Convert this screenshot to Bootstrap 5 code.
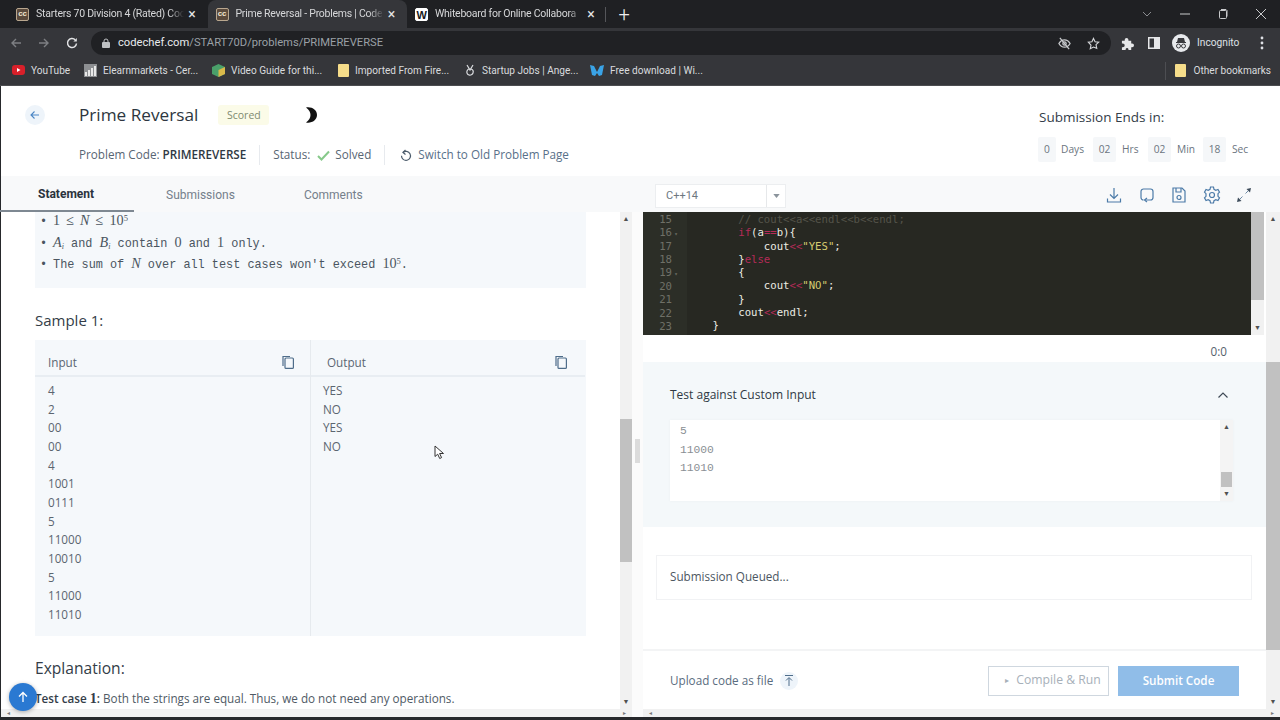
<!DOCTYPE html>
<html lang="en">
<head>
  <meta charset="UTF-8">
  <title>Prime Reversal - Problems | CodeChef</title>
  <link href="https://cdn.jsdelivr.net/npm/bootstrap@5.3.0/dist/css/bootstrap.min.css" rel="stylesheet">
  <style>
    html, body { height: 720px; overflow: hidden; }
    body { font-family: "Open Sans", sans-serif; background: #fff; color: #3f4a56; font-size: 11.7px; }

    /* Browser chrome */
    .tab-strip { height: 28px; background: #1f2023; padding-left: 8px; color: #d6d7d9; font-family: Roboto, sans-serif; font-size: 10.5px; letter-spacing: -.25px; }
    .br-tab { width: 199.5px; height: 28px; padding: 0 12px 0 8px; flex: none; }
    .br-tab-on { background: #35363a; border-radius: 8px 8px 0 0; }
    .br-tab-title { width: 148px; white-space: nowrap; overflow: hidden; margin-left: 7px; flex: none; -webkit-mask-image: linear-gradient(90deg, #000 90%, transparent); mask-image: linear-gradient(90deg, #000 90%, transparent); }
    .fav { width: 13px; height: 13px; flex: none; background: #5b4a3c; border: 1px solid #b9a78f; color: #f2e6d0; font: 700 8px/10px "Liberation Sans", sans-serif; text-align: center; border-radius: 2px; }
    .fav-w { background: #fff; border-color: #fff; color: #17181a; font-size: 11px; line-height: 12px; }
    .br-x { margin-left: auto; color: #e4e5e6; font-size: 14px; line-height: 1; }
    .br-plus { color: #eee; font-size: 20px; line-height: 1; margin-left: 13px; font-weight: 300; }
    .tab-sep { width: 1px; height: 15px; background: #55565a; margin-left: -2px; }
    .win-btns { margin-left: auto; gap: 28px; padding-right: 14px; }
    .toolbar { height: 30px; background: #35363a; padding: 0 16px 0 10px; }
    .omni { width: 1020px; height: 24px; margin-left: 13px; background: #202124; border-radius: 12px; padding: 0 11px 0 11px; color: #9aa0a6; font-family: Roboto, sans-serif; font-size: 11.2px; white-space: nowrap; }
    .omni b { color: #e8eaed; font-weight: 400; }
    .ic-ext { margin-left: 10px; }
    .ic-side { margin-left: 14px; }
    .incog { color: #dfe1e5; font-family: Roboto, sans-serif; font-size: 10.2px; gap: 7px; margin-left: 12px; }
    .bookmarks { height: 28px; background: #35363a; color: #d9dbde; font-family: Roboto, sans-serif; font-size: 10.1px; border-bottom: 1px solid #4c4d50; padding: 0 0 2px 12px; white-space: nowrap; }
    .bm-item { gap: 6px; flex: none; }
    .bm-1 { width: 72px; } .bm-2 { width: 128px; } .bm-3 { width: 126px; } .bm-4 { width: 126px; } .bm-5 { width: 126px; }
    .bm-other { margin-left: auto; padding-right: 9px; gap: 8px; }
    .bm-sep { width: 1px; height: 18px; background: #4d4e52; margin-right: 1px; }
    .folder { width: 11px; height: 13px; background: #f6dd8a; border-radius: 1px; flex: none; }

    /* Page */
    .page-wrap { height: 634px; border-left: 1px solid #26282b; border-bottom: 3px solid #26282b; }
    .prob-head { height: 90px; flex: none; }
    .head-left { padding: 19px 0 0 24px; }
    .back-btn { width: 20px; height: 20px; border-radius: 50%; background: #eef4fa; flex: none; }
    .prob-title { font-size: 17.2px; font-weight: 500; color: #2d3640; margin: 0 0 0 34px; line-height: 20px; white-space: nowrap; }
    .scored { margin-left: 20px; width: 51px; height: 20px; background: #fbfbe8; color: #7f8a70; font-size: 10.5px; line-height: 20px; text-align: center; border-radius: 3px; }
    .moon { margin-left: 35px; }
    .prob-meta { margin: 20px 0 0 54px; height: 20px; white-space: nowrap; color: #586573; }
    .prob-meta b { color: #2f3944; font-weight: 600; }
    .meta-sep { width: 1px; height: 20px; background: #e7eaee; margin: 0 13px; }
    .meta-check { margin: 0 5px 0 7px; }
    .meta-undo { margin: 0 6px 0 2px; }
    .meta-link { color: #587089; }
    .timer { width: 242px; padding-top: 22px; flex: none; }
    .timer-title { font-size: 13.5px; font-weight: 500; color: #333d48; line-height: 18px; margin: 0 0 11px 1px; }
    .timer-row { font-size: 10.2px; color: #6b7580; height: 25px; }
    .t-box { background: #f5f7f9; height: 25px; line-height: 25px; text-align: center; border-radius: 2px; }
    .t-1 { width: 18px; } .t-2 { width: 23px; }
    .t-lbl-d { margin-left: 5px; width: 32px; }
    .t-lbl-s { margin-left: 6px; width: 26px; }

    .work-bar { height: 36px; flex: none; background: #f8f9fa; }
    .tabs-left { width: 631px; flex: none; }
    .prob-tab { height: 36px; color: #75808b; font-family: Roboto, sans-serif; font-size: 12px; padding-top: 10px; }
    .tab-active { width: 134px; margin-left: -1px; padding: 9px 0 0 38px; color: #2b333c; font-weight: 700; border-bottom: 2px solid #7e8892; margin-right: 32px; }
    .tab-comments { margin-left: 69px; }
    .tabs-right { flex: 1; padding: 0 27px 0 23px; }
    .lang-sel { width: 131px; height: 24px; background: #fff; border: 1px solid #eceef0; margin-top: 8px; color: #6d7780; font-family: Roboto, sans-serif; font-size: 11px; padding-left: 10px; }
    .lang-caret { margin-left: auto; width: 19px; height: 22px; border-left: 1px solid #e6e8ea; }
    .tool-icons { margin-left: auto; gap: 14.5px; padding-top: 2px; }

    .split { flex: 1; min-height: 0; }
    .left-pane { width: 631px; flex: none; }
    .left-body { flex: 1; min-height: 0; }
    .left-scroll { flex: 1; min-width: 0; overflow: hidden; padding: 0 34px; }
    .constraint-box { background: #f5f8fb; height: 76px; padding: 0; font-family: "Liberation Mono", monospace; font-size: 11.85px; color: #4a5560; margin: 0; list-style: none; }
    .constraint-box li { height: 21.5px; line-height: 17px; padding-left: 5px; white-space: nowrap; }
    .constraint-box li::before { content: "•"; margin-right: 6px; }
    .mth { font-family: "Liberation Serif", serif; font-size: 14.2px; }
    .mth-wide { word-spacing: 2.5px; }
    .mth i { font-style: italic; }
    .mth sup { font-size: 8.5px; top: -.5em; }
    .mth sub { font-size: 8px; }
    .sec-h { font-size: 15px; font-weight: 500; color: #333d48; line-height: 20px; margin: 0; }
    .sec-sample { margin-top: 22px; margin-bottom: 10px; }
    .sample-tbl { background: #f5f8fb; height: 296px; }
    .sample-col { width: 275px; flex: none; }
    .sample-col + .sample-col { border-left: 1px solid #e6eaee; }
    .sample-hd { height: 37px; border-bottom: 2px solid #e8edf2; color: #5b6672; padding: 8px 16px 0 13px; }
    .sample-hd span { margin-top: 3px; }
    .sample-hd-out { padding: 8px 18px 0 16px; }
    .sample-lines { padding: 4px 0 0 13px; line-height: 18.65px; color: #5b6570; white-space: pre; }
    .sample-out { padding-left: 12px; }
    .sec-expl { margin-top: 22px; margin-bottom: 10px; font-size: 15.6px; }
    .expl-text { white-space: nowrap; color: #4f5a65; line-height: 20px; }
    .expl-text b { font-weight: 600; color: #333d48; }
    .sbar { width: 12px; flex: none; background: #f1f1f1; }
    .sbar-arrow { height: 14px; color: #505050; font-size: 7px; line-height: 14px; text-align: center; }
    .sbar-l-thumb { height: 143px; margin-top: 193px; background: #c1c1c1; }
    .hbar { height: 8px; flex: none; background: #f1f1f1; color: #777; font-size: 6px; line-height: 8px; padding: 0 6px; }
    .grip { width: 11px; flex: none; background: #fbfbfb; }
    .grip-dots { width: 5px; height: 24px; margin: 227px auto 0; background-image: radial-gradient(#dcdcdc 1px, transparent 1px); background-size: 2px 3px; }

    .right-pane { flex: 1; min-width: 0; }
    .right-body { flex: 1; min-height: 0; }
    .right-main { flex: 1; min-width: 0; }
    .editor-row { height: 123px; flex: none; padding-right: 2px; }
    .editor { flex: 1; min-width: 0; background: #272822; overflow: hidden; font-family: "DejaVu Sans Mono", monospace; font-size: 10.65px; line-height: 13.25px; }
    .ed-gutter { width: 44px; flex: none; background: #2c2e27; color: #6f7067; text-align: right; padding: 1px 15px 0 0; }
    .ed-fold { display: inline-block; width: 8px; margin-right: -8px; font-size: 6px; text-align: center; vertical-align: middle; }
    .ed-code { color: #ecece4; white-space: pre; padding-top: 1px; }
    .c-com { color: #55544a; } .c-key { color: #b52b58; } .c-str { color: #d6cc70; }
    .ed-bar { width: 13px; flex: none; background: #f1f1f1; }
    .ed-thumb { height: 88px; background: #c1c1c1; }
    .ed-down { margin-top: auto; }
    .row-pos { height: 27px; flex: none; padding: 7px 39px 0 0; color: #56616c; }
    .custom-sec { height: 165px; flex: none; background: #f4f8fa; padding: 21px 33px 0 27px; }
    .custom-title { font-size: 12px; font-weight: 500; color: #2f3944; line-height: 24px; padding-right: 5px; }
    .custom-box { height: 81px; background: #fff; margin-top: 13px; box-shadow: 0 0 3px rgba(0,0,0,.04); }
    .custom-text { flex: 1; font-family: "Liberation Mono", monospace; font-size: 11.3px; line-height: 18.6px; color: #8a8f94; padding: 2px 0 0 10px; white-space: pre; }
    .cust-bar { width: 13px; background: #f4f4f4; flex: none; }
    .cust-thumb { height: 16px; width: 11px; margin: 38px auto 0; background: #c1c1c1; }
    .queue-wrap { height: 124px; flex: none; padding: 28px 14px 0 13px; border-bottom: 2px solid #f3f4f5; }
    .queue-box { height: 45px; border: 1px solid #f1f2f4; padding: 0 0 2px 13px; color: #4c5661; }
    .foot-row { height: 57px; flex: none; padding: 2px 27px 0 27px; }
    .up-link { color: #5a6c7e; gap: 7px; }
    .up-ico { width: 18px; height: 18px; border-radius: 50%; background: #eef4fa; }
    .btn.run-btn { width: 121px; height: 30px; border: 1px solid #cfd7df; border-radius: 0; color: #a7b0b9; font-size: 12.2px; padding: 0 0 0 9px; margin-right: 9px; }
    .run-caret { font-size: 8px; margin-right: 7px; vertical-align: 1px; }
    .btn.sub-btn { width: 121px; height: 30px; background: #90bde8; border: 0; border-radius: 0; color: #fff; font-size: 11.7px; font-weight: 600; padding: 0; }
    .outer-bar { width: 14px; flex: none; background: #f1f1f1; }
    .outer-thumb { height: 288px; margin-top: 136px; background: #c1c1c1; }

    /* Overlays */
    .fab { position: absolute; left: 9px; top: 683px; width: 28px; height: 28px; border-radius: 50%; background: #2a79d2; box-shadow: 0 1px 4px rgba(0,0,0,.3); }
    .cursor-ov { position: absolute; left: 434px; top: 445px; }
  </style>
</head>
<body>
  <!-- Browser chrome -->
  <div class="tab-strip d-flex align-items-center">
    <div class="br-tab d-flex align-items-center"><span class="fav">cc</span><span class="br-tab-title">Starters 70 Division 4 (Rated) Coc</span><span class="br-x">×</span></div>
    <div class="br-tab br-tab-on d-flex align-items-center"><span class="fav">cc</span><span class="br-tab-title">Prime Reversal - Problems | Code</span><span class="br-x">×</span></div>
    <div class="br-tab d-flex align-items-center"><span class="fav fav-w">W</span><span class="br-tab-title">Whiteboard for Online Collabora</span><span class="br-x">×</span></div>
    <span class="tab-sep"></span>
    <span class="br-plus">+</span>
    <div class="win-btns d-flex align-items-center">
      <svg width="10" height="10" viewBox="0 0 10 10" fill="none" stroke="#8a8c90"><path d="M1 3l4 4 4-4"/></svg>
      <svg width="10" height="10" viewBox="0 0 10 10" fill="none" stroke="#c9cacc"><path d="M0 5h10"/></svg>
      <svg width="10" height="10" viewBox="0 0 10 10" fill="none" stroke="#c9cacc"><rect x="1.5" y="1.5" width="7" height="8" rx="1"/><path d="M3 .5h5l1 1v6"/></svg>
      <svg width="10" height="10" viewBox="0 0 10 10" fill="none" stroke="#c9cacc"><path d="M0 0l10 10M10 0L0 10"/></svg>
    </div>
  </div>
  <div class="toolbar d-flex align-items-center">
    <svg class="me-3" width="12" height="12" viewBox="0 0 12 12" fill="none" stroke="#7d7f83" stroke-width="1.4"><path d="M11 6H2M6 2L2 6l4 4"/></svg>
    <svg class="me-3" width="12" height="12" viewBox="0 0 12 12" fill="none" stroke="#7d7f83" stroke-width="1.4"><path d="M1 6h9M6 2l4 4-4 4"/></svg>
    <svg width="12" height="12" viewBox="0 0 12 12" fill="none" stroke="#e3e4e6" stroke-width="1.5"><path d="M10.5 6.5A4.5 4.5 0 1 1 9.2 2.8"/><path d="M10.8 1v3.4H7.4" fill="#e3e4e6" stroke="none"/></svg>
    <div class="omni d-flex align-items-center">
      <svg class="me-2" width="8" height="10" viewBox="0 0 8 10" fill="#bfc1c4"><rect y="4" width="8" height="6" rx="1"/><path d="M2 4V3a2 2 0 0 1 4 0v1" fill="none" stroke="#bfc1c4"/></svg>
      <span><b>codechef.com</b>/START70D/problems/PRIMEREVERSE</span>
      <svg class="ms-auto me-2" width="13" height="13" viewBox="0 0 14 14" fill="none" stroke="#c9cbce" stroke-width="1.4"><path d="M1 7s2.2-4 6-4 6 4 6 4-2.2 4-6 4-6-4-6-4z"/><circle cx="7" cy="7" r="1.8"/><path d="M2 1l10 12"/></svg>
      <svg class="ms-2" width="13" height="13" viewBox="0 0 14 14" fill="none" stroke="#d5d7da" stroke-width="1.2"><path d="M7 1.5l1.7 3.6 3.9.5-2.9 2.7.8 3.9L7 10.8l-3.5 1.9.8-3.9L1.4 5.6l3.9-.5z"/></svg>
    </div>
    <svg class="ic-ext" width="13" height="13" viewBox="0 0 14 14" fill="#e6e7e9"><path d="M1 4h3V3a2 2 0 0 1 4 0v1h3v3h1a2 2 0 0 1 0 4h-1v3H8v-1a1.6 1.6 0 0 0-3 0v1H1v-3h1a2 2 0 0 0 0-4H1z"/></svg>
    <svg class="ic-side" width="12" height="12" viewBox="0 0 12 12"><rect x=".75" y=".75" width="10.5" height="10.5" fill="none" stroke="#e6e7e9" stroke-width="1.5"/><rect x="6" y="1" width="5" height="10" fill="#e6e7e9"/></svg>
    <div class="incog d-flex align-items-center">
      <svg width="18" height="18" viewBox="0 0 18 18"><circle cx="9" cy="9" r="9" fill="#e8eaed"/><path d="M4 8h10v1H4zM6 4h6l1 4H5z" fill="#3a3b3f"/><circle cx="6.5" cy="12" r="2" fill="none" stroke="#3a3b3f"/><circle cx="11.5" cy="12" r="2" fill="none" stroke="#3a3b3f"/></svg>
      <span>Incognito</span>
    </div>
    <svg class="ms-auto" width="4" height="14" viewBox="0 0 4 14" fill="#dfe1e5"><circle cx="2" cy="2" r="1.4"/><circle cx="2" cy="7" r="1.4"/><circle cx="2" cy="12" r="1.4"/></svg>
  </div>
  <div class="bookmarks d-flex align-items-center">
    <div class="bm-item bm-1 d-flex align-items-center">
      <svg width="13" height="10" viewBox="0 0 13 10"><rect width="13" height="10" rx="3" fill="#d8202a"/><path d="M5 3l3.5 2L5 7z" fill="#fff"/></svg><span>YouTube</span>
    </div>
    <div class="bm-item bm-2 d-flex align-items-center">
      <svg width="13" height="13" viewBox="0 0 13 13"><rect width="13" height="13" fill="#8d8f92"/><path d="M1 12V8h2v4zm3 0V6h2v6zm3 0V4h2v8zm3 0V2h2v10z" fill="#e8e8e8"/></svg><span>Elearnmarkets - Cer...</span>
    </div>
    <div class="bm-item bm-3 d-flex align-items-center">
      <svg width="13" height="13" viewBox="0 0 13 13"><path d="M6.5 0L13 3v7l-6.5 3L0 10V3z" fill="#4aa06a"/><path d="M6.5 6L13 3v7l-6.5 3z" fill="#d9b94a"/></svg><span>Video Guide for thi...</span>
    </div>
    <div class="bm-item bm-4 d-flex align-items-center"><span class="folder"></span><span>Imported From Fire...</span></div>
    <div class="bm-item bm-5 d-flex align-items-center">
      <svg width="12" height="13" viewBox="0 0 12 13" fill="none" stroke="#d9dbde" stroke-width="1.2"><path d="M3 1l3 5 3-5M3 7a3 3 0 1 0 6 2 3 3 0 0 0-6-2z"/></svg><span>Startup Jobs | Ange...</span>
    </div>
    <div class="bm-item d-flex align-items-center">
      <svg width="14" height="13" viewBox="0 0 14 13"><path d="M0 1l4 1 3 6 3-6 4-1-2 10-3 1-2-3-2 3-3-1z" fill="#3aa3e6"/></svg><span>Free download | Wi...</span>
    </div>
    <div class="bm-other d-flex align-items-center"><span class="bm-sep"></span><span class="folder"></span><span>Other bookmarks</span></div>
  </div>

  <!-- Page -->
  <div class="page-wrap d-flex flex-column">
    <div class="prob-head d-flex justify-content-between">
      <div class="head-left">
        <div class="d-flex align-items-center">
          <span class="back-btn d-flex align-items-center justify-content-center">
            <svg width="10" height="10" viewBox="0 0 10 10" fill="none" stroke="#4a86c5" stroke-width="1.1"><path d="M9 5H1M4.5 1.5L1 5l3.5 3.5"/></svg>
          </span>
          <h1 class="prob-title">Prime Reversal</h1>
          <span class="scored">Scored</span>
          <svg class="moon" width="14" height="16" viewBox="0 0 14 16"><path d="M2 .5C8-.5 13 3 13 8s-5 8.5-11 7.5C5 13 6.5 11 6.5 8S5 3 2 .5z" fill="#111"/></svg>
        </div>
        <div class="prob-meta d-flex align-items-center">
          <span>Problem Code: <b>PRIMEREVERSE</b></span>
          <span class="meta-sep"></span>
          <span>Status:</span>
          <svg class="meta-check" width="13" height="11" viewBox="0 0 13 11" fill="none" stroke="#86c98a" stroke-width="2"><path d="M1 6l3.5 3.5L12 1.5"/></svg>
          <span>Solved</span>
          <span class="meta-sep"></span>
          <svg class="meta-undo" width="12" height="13" viewBox="0 0 12 13" fill="none" stroke="#4b5b6b" stroke-width="1.2"><path d="M3 3.5a4.5 4.5 0 1 1-1.5 3.3"/><path d="M5.5 1L3 3.5l2.500 2"/></svg>
          <span class="meta-link">Switch to Old Problem Page</span>
        </div>
      </div>
      <div class="timer">
        <div class="timer-title">Submission Ends in:</div>
        <div class="timer-row d-flex align-items-center">
          <span class="t-box t-1">0</span><span class="t-lbl-d">Days</span>
          <span class="t-box t-2">02</span><span class="t-lbl-s">Hrs</span>
          <span class="t-box t-2">02</span><span class="t-lbl-s">Min</span>
          <span class="t-box t-2">18</span><span class="t-lbl-s">Sec</span>
        </div>
      </div>
    </div>

    <div class="work-bar d-flex">
      <div class="tabs-left d-flex">
        <div class="prob-tab tab-active">Statement</div>
        <div class="prob-tab">Submissions</div>
        <div class="prob-tab tab-comments">Comments</div>
      </div>
      <div class="tabs-right d-flex">
        <div class="lang-sel d-flex align-items-center">
          <span>C++14</span>
          <span class="lang-caret d-flex align-items-center justify-content-center">
            <svg width="7" height="4" viewBox="0 0 8 5" fill="#8b949c"><path d="M0 0h8L4 5z"/></svg>
          </span>
        </div>
        <div class="tool-icons d-flex align-items-center">
          <svg width="18" height="18" viewBox="0 0 18 18" fill="none" stroke="#4c7ba8" stroke-width="1.2"><path d="M9 2v10M5 8.5l4 4 4-4M2.500 12.5V16h13v-3.500"/></svg>
          <svg width="18" height="18" viewBox="0 0 18 18" fill="none" stroke="#4c7ba8" stroke-width="1.2"><path d="M5.500 14A2.500 2.500 0 0 1 3 11.500v-6A2.500 2.500 0 0 1 5.500 3h7A2.500 2.500 0 0 1 15 5.500v6a2.500 2.500 0 0 1-2.500 2.500H7"/><path d="M9 12l-2.500 2L9 16"/></svg>
          <svg width="18" height="18" viewBox="0 0 18 18" fill="none" stroke="#4c7ba8" stroke-width="1.2"><path d="M3 2h9l3 3v11H3z"/><path d="M6 2v4h5V2"/><circle cx="9" cy="11.5" r="2"/></svg>
          <svg width="18" height="18" viewBox="0 0 18 18" fill="none" stroke="#4c7ba8" stroke-width="1.2"><circle cx="9" cy="9" r="2.5"/><path d="M7.500 1h3l.5 2.300 1.800 1 2.200-.8 1.500 2.600L15 7.700v2.600l1.500 1.600-1.500 2.600-2.200-.8-1.800 1-.5 2.300h-3L7 14.700l-1.800-1-2.200.8-1.500-2.600L3 10.300V7.700L1.500 6.100 3 3.500l2.200.8 1.800-1z"/></svg>
          <svg width="18" height="18" viewBox="0 0 18 18" fill="#3d4c5b" stroke="#6d8aa5"><path d="M16 2l-4.500 1 3.500 3.500z" stroke="none"/><path d="M2 16l4.500-1L3 11.500z" stroke="none"/><path d="M13 5l-2.500 2.500M5 13l2.500-2.500" fill="none"/></svg>
        </div>
      </div>
    </div>

    <div class="split d-flex">
      <!-- Problem statement -->
      <div class="left-pane d-flex flex-column">
        <div class="left-body d-flex">
          <div class="left-scroll">
            <ul class="constraint-box">
              <li><span class="mth mth-wide">1 ≤ <i>N</i> ≤ 10<sup>5</sup></span></li>
              <li><span class="mth"><i>A<sub>i</sub></i></span> and <span class="mth"><i>B<sub>i</sub></i></span> contain <span class="mth">0</span> and <span class="mth">1</span> only.</li>
              <li>The sum of <span class="mth"><i>N</i></span> over all test cases won't exceed <span class="mth">10<sup>5</sup></span>.</li>
            </ul>
            <h2 class="sec-h sec-sample">Sample 1:</h2>
            <div class="sample-tbl d-flex">
              <div class="sample-col">
                <div class="sample-hd d-flex align-items-center justify-content-between">
                  <span>Input</span>
                  <svg width="12" height="14" viewBox="0 0 12 14" fill="none" stroke="#4f6d8a" stroke-width="1.2"><rect x="3" y="3" width="8.4" height="10.4" rx="1"/><path d="M1 11V1.500h7"/></svg>
                </div>
                <div class="sample-lines">4
2
00
00
4
1001
0111
5
11000
10010
5
11000
11010</div>
              </div>
              <div class="sample-col">
                <div class="sample-hd sample-hd-out d-flex align-items-center justify-content-between">
                  <span>Output</span>
                  <svg width="12" height="14" viewBox="0 0 12 14" fill="none" stroke="#4f6d8a" stroke-width="1.2"><rect x="3" y="3" width="8.4" height="10.4" rx="1"/><path d="M1 11V1.500h7"/></svg>
                </div>
                <div class="sample-lines sample-out">YES
NO
YES
NO</div>
              </div>
            </div>
            <h2 class="sec-h sec-expl">Explanation:</h2>
            <p class="expl-text mb-0"><b>Test case <span class="mth">1</span>:</b> Both the strings are equal. Thus, we do not need any operations.</p>
          </div>
          <div class="sbar d-flex flex-column">
            <div class="sbar-arrow">▲</div>
            <div class="sbar-l-thumb"></div>
            <div class="sbar-arrow mt-auto">▼</div>
          </div>
        </div>
        <div class="hbar d-flex justify-content-between"><span>◂</span><span>▸</span></div>
      </div>

      <div class="grip"><div class="grip-dots"></div></div>

      <!-- Editor side -->
      <div class="right-pane d-flex flex-column">
        <div class="right-body d-flex">
          <div class="right-main d-flex flex-column">
            <div class="editor-row d-flex">
              <div class="editor d-flex">
                <div class="ed-gutter">15<br>16<span class="ed-fold">▾</span><br>17<br>18<br>19<span class="ed-fold">▾</span><br>20<br>21<br>22<br>23</div>
                <div class="ed-code"><span class="c-com">        // cout&lt;&lt;a&lt;&lt;endl&lt;&lt;b&lt;&lt;endl;</span>
        <span class="c-key">if</span>(a<span class="c-key">==</span>b){
            cout<span class="c-key">&lt;&lt;</span><span class="c-str">"YES"</span>;
        }<span class="c-key">else</span>
        {
            cout<span class="c-key">&lt;&lt;</span><span class="c-str">"NO"</span>;
        }
        cout<span class="c-key">&lt;&lt;</span>endl;
    }</div>
              </div>
              <div class="ed-bar d-flex flex-column">
                <div class="ed-thumb"></div>
                <div class="sbar-arrow ed-down">▼</div>
              </div>
            </div>
            <div class="row-pos d-flex align-items-center justify-content-end">0:0</div>
            <div class="custom-sec">
              <div class="custom-title d-flex align-items-center justify-content-between">
                <span>Test against Custom Input</span>
                <svg width="10" height="6" viewBox="0 0 10 6" fill="none" stroke="#3f4a56" stroke-width="1.2"><path d="M.5 5.5L5 1l4.500 4.500"/></svg>
              </div>
              <div class="custom-box d-flex">
                <div class="custom-text">5
11000
11010</div>
                <div class="cust-bar d-flex flex-column">
                  <div class="sbar-arrow">▲</div>
                  <div class="cust-thumb"></div>
                  <div class="sbar-arrow mt-auto">▼</div>
                </div>
              </div>
            </div>
            <div class="queue-wrap">
              <div class="queue-box d-flex align-items-center">Submission Queued...</div>
            </div>
            <div class="foot-row d-flex align-items-center">
              <div class="up-link d-flex align-items-center">
                <span>Upload code as file</span>
                <span class="up-ico d-flex align-items-center justify-content-center">
                  <svg width="10" height="12" viewBox="0 0 10 12" fill="none" stroke="#4f6d8a"><path d="M1 .5h8M5 11V3M2 5.5l3-3 3 3"/></svg>
                </span>
              </div>
              <button type="button" class="btn run-btn ms-auto"><span class="run-caret">▸</span>Compile &amp; Run</button>
              <button type="button" class="btn sub-btn">Submit Code</button>
            </div>
          </div>
          <div class="outer-bar d-flex flex-column">
            <div class="sbar-arrow">▲</div>
            <div class="outer-thumb"></div>
            <div class="sbar-arrow mt-auto">▼</div>
          </div>
        </div>
        <div class="hbar d-flex justify-content-between"><span>◂</span><span>▸</span></div>
      </div>
    </div>
  </div>

  <div class="fab d-flex align-items-center justify-content-center">
    <svg width="12" height="12" viewBox="0 0 12 12" fill="none" stroke="#fff" stroke-width="1.3"><path d="M6 11V1.5M2 5.5l4-4 4 4"/></svg>
  </div>
  <svg class="cursor-ov" width="11" height="15" viewBox="0 0 11 15"><path d="M1 1v10.500l2.700-2.300 2 4.300 1.900-.9-2-4.100H9.500z" fill="#fff" stroke="#333"/></svg>

  <script src="https://cdn.jsdelivr.net/npm/bootstrap@5.3.0/dist/js/bootstrap.bundle.min.js"></script>
</body>
</html>
